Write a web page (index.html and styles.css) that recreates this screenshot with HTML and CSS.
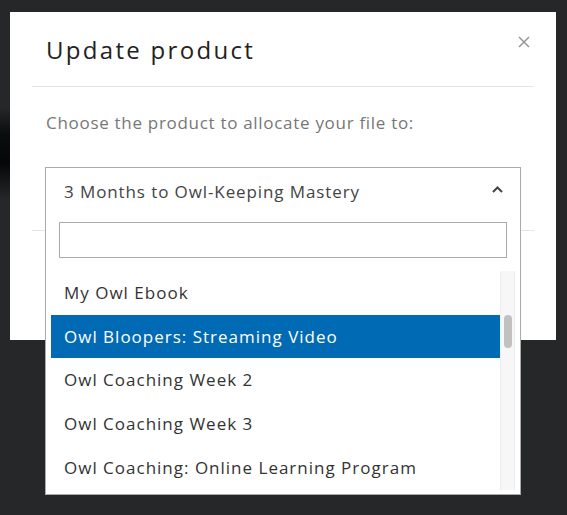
FILE: index.html
```html
<!DOCTYPE html>
<html lang="en">
<head>
<meta charset="utf-8">
<title>Update product</title>
<link rel="stylesheet" href="styles.css">
</head>
<body>
<div class="backdrop-shade"></div>
<div class="modal">
  <div class="modal-header">
    <h2 class="modal-title">Update product</h2>
    <button class="close" aria-label="Close">
      <svg width="12" height="12" viewBox="0 0 12 12"><path d="M1 1L11 11M11 1L1 11" stroke="#9a9a9a" stroke-width="1.6" fill="none"/></svg>
    </button>
  </div>
  <div class="modal-body">
    <p class="intro">Choose the product to allocate your file to:</p>
    <div class="combo">
      <div class="combo-selection">
        <span class="combo-value">3 Months to Owl-Keeping Mastery</span>
        <svg class="chevron" width="11" height="7" viewBox="0 0 11 7"><path d="M1 6L5.5 1.5L10 6" stroke="#444" stroke-width="2" fill="none"/></svg>
      </div>
      <div class="combo-search"><input class="search-input" type="text"></div>
      <div class="results">
        <ul class="options">
          <li class="option">My Owl Ebook</li>
          <li class="option active">Owl Bloopers: Streaming Video</li>
          <li class="option">Owl Coaching Week 2</li>
          <li class="option">Owl Coaching Week 3</li>
          <li class="option">Owl Coaching: Online Learning Program</li>
        </ul>
        <div class="scrollbar"><div class="thumb"></div></div>
      </div>
    </div>
  </div>
  <div class="modal-footer"></div>
</div>
</body>
</html>
```
FILE: styles.css
```css
* { box-sizing: border-box; }
html, body { margin: 0; padding: 0; }
body {
  width: 567px;
  height: 515px;
  overflow: hidden;
  background: #262728;
  font-family: "Open Sans", "Liberation Sans", sans-serif;
  position: relative;
  padding-top: 12px;
}
.backdrop-shade {
  position: absolute;
  left: 0;
  top: 108px;
  width: 12px;
  height: 92px;
  background: linear-gradient(to bottom, #262728 0%, #0a0d0e 28%, #050708 60%, #262728 100%);
}
.modal {
  position: relative;
  width: 546px;
  height: 328px;
  margin-left: 10px;
  background: #fff;
  padding: 0 22px;
  display: flex;
  flex-direction: column;
}
.modal-header {
  height: 75px;
  border-bottom: 1px solid #e6e6e6;
  display: flex;
  justify-content: space-between;
  align-items: flex-start;
  padding: 0 4px 0 14px;
}
.modal-title {
  margin: 0;
  padding-top: 22px;
  font-size: 24px;
  line-height: 32px;
  font-weight: 400;
  color: #222;
  letter-spacing: 2.3px;
}
.close {
  border: 0;
  background: none;
  padding: 0;
  margin-top: 24px;
  width: 12px;
  height: 12px;
  display: block;
}
.close svg { display: block; }
.modal-body {
  height: 143px;
  padding: 0 13px;
}
.intro {
  margin: 0;
  padding: 24px 0 0 1px;
  font-size: 17px;
  line-height: 24px;
  color: #777;
  letter-spacing: 0.7px;
  height: 80px;
}
.combo {
  position: relative;
  z-index: 2;
  border: 1px solid #aaa;
  background: #fff;
  height: 328px;
  display: flex;
  flex-direction: column;
}
.combo-selection {
  height: 46px;
  display: flex;
  align-items: center;
  justify-content: space-between;
  padding: 0 17px 0 18px;
}
.combo-value {
  font-size: 17px;
  color: #444;
  letter-spacing: 0.9px;
}
.chevron { display: block; margin-top: -4px; }
.combo-search {
  padding: 8px 13px 13px;
}
.search-input {
  display: block;
  width: 100%;
  height: 36px;
  border: 1px solid #aaa;
  margin: 0;
  padding: 0 8px;
  background: #fff;
  outline: none;
}
.results {
  margin: 0 5px;
  height: 219px;
  display: flex;
}
.options {
  list-style: none;
  margin: 0;
  padding: 0;
  flex: 1;
}
.option {
  height: 43.6px;
  display: flex;
  align-items: center;
  padding-left: 13px;
  font-size: 17px;
  color: #333;
  letter-spacing: 1px;
  white-space: nowrap;
}
.option.active {
  background: #016ab5;
  color: #fff;
}
.scrollbar {
  width: 15px;
  background: #f7f7f7;
  border-left: 1px solid #ededed;
  border-right: 1px solid #ededed;
  padding: 44px 2px 0 3px;
}
.thumb {
  width: 8px;
  height: 33px;
  border-radius: 4px;
  background: #c1c1c1;
}
.modal-footer {
  flex: 1;
  border-top: 1px solid #dfe6eb;
}
```
